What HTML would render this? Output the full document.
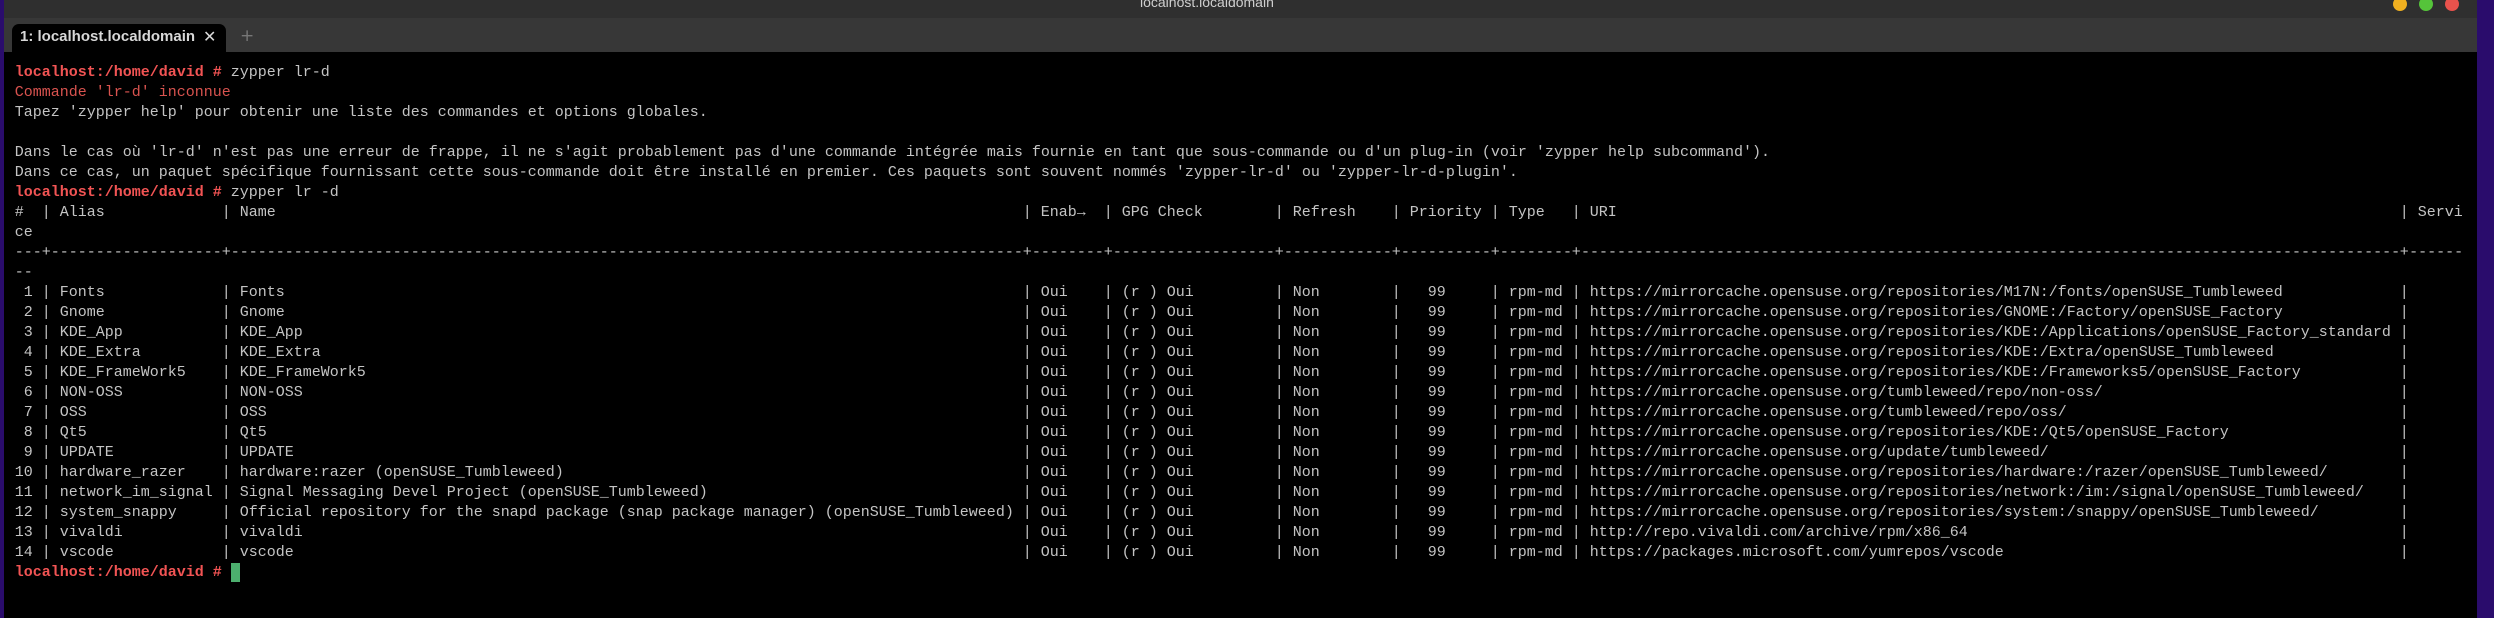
<!DOCTYPE html>
<html><head><meta charset="utf-8"><style>
*{margin:0;padding:0;box-sizing:border-box}
body{width:2494px;height:618px;overflow:hidden;background:#000;position:relative;font-family:"Liberation Mono","DejaVu Sans Mono",monospace}
.pl{position:absolute;top:0;bottom:0;background:#2a0c6c}
#t1{position:absolute;left:4px;top:0;width:2473px;height:18px;background:#2f2f2f}
#t2{position:absolute;left:4px;top:18px;width:2473px;height:34px;background:#373737}
#title{position:absolute;left:1140px;top:-6px;font:14px "Liberation Sans",sans-serif;color:#cfcfcf;white-space:nowrap}
#tab{position:absolute;left:12px;top:24px;width:214px;height:28px;background:#000;border-radius:7px 7px 0 0}
#tabt{position:absolute;left:20px;top:28px;font:bold 15px "Liberation Sans",sans-serif;color:#d8d8d8;white-space:nowrap}
#tabx{position:absolute;left:203px;top:27px;font:16px "DejaVu Sans",sans-serif;color:#d8d8d8}
#plus{position:absolute;left:240px;top:26px;font:17px "DejaVu Sans",sans-serif;color:#777}
.dot{position:absolute;top:-3px;width:14px;height:14px;border-radius:50%}
.l{position:absolute;left:14.7px;height:20px;line-height:20px;font-size:15px;color:#c4c4c4;white-space:pre}
.s{position:absolute;top:0;white-space:pre}
.p{color:#f25454;font-weight:bold}
.r{color:#d9534f}
.k{background:#000}
#cur{position:absolute;left:230.7px;top:563px;width:9px;height:19px;background:#4caf6e}
</style></head><body>
<div class="pl" style="left:0;width:4px"></div>
<div class="pl" style="left:2477px;width:17px"></div>
<div id="t1"></div><div id="t2"></div>
<div id="title">localhost.localdomain</div>
<div class="dot" style="left:2393px;background:#f0b020"></div>
<div class="dot" style="left:2419px;background:#55c43a"></div>
<div class="dot" style="left:2445px;background:#e8524c"></div>
<div id="tab"></div><div id="tabt">1: localhost.localdomain</div><div id="tabx">✕</div><div id="plus">+</div>

<div class="l" style="top:63px"><span class="p">localhost:/home/david # </span>zypper lr-d</div>
<div class="l r" style="top:83px">Commande 'lr-d' inconnue</div>
<div class="l" style="top:103px">Tapez 'zypper help' pour obtenir une liste des commandes et options globales.</div>
<div class="l" style="top:143px">Dans le cas où 'lr-d' n'est pas une erreur de frappe, il ne s'agit probablement pas d'une commande intégrée mais fournie en tant que sous-commande ou d'un plug-in (voir 'zypper help subcommand').</div>
<div class="l" style="top:163px">Dans ce cas, un paquet spécifique fournissant cette sous-commande doit être installé en premier. Ces paquets sont souvent nommés 'zypper-lr-d' ou 'zypper-lr-d-plugin'.</div>
<div class="l" style="top:183px"><span class="p">localhost:/home/david # </span>zypper lr -d</div>

<div class="l" style="top:203px"><span class="s" style="left:0">#</span><span class="s" style="left:27px">| Alias</span><span class="s" style="left:207px">| Name</span><span class="s" style="left:1008px">| Enab<span style="display:inline-block;width:9px;overflow:hidden;vertical-align:top">→</span></span><span class="s" style="left:1089px">| GPG Check</span><span class="s" style="left:1260px">| Refresh</span><span class="s" style="left:1377px">| Priority</span><span class="s" style="left:1476px">| Type</span><span class="s" style="left:1557px">| URI</span><span class="s" style="left:2385px">| Servi</span></div>
<div class="l" style="top:223px">ce</div>
<div class="l" style="top:243px;width:2448px;overflow:hidden"><span class="s" style="left:0">----------------------------------------------------------------------------------------------------------------------------------------------------------------------------------------------------------------------------------------------------------------------------------------------------------------</span><span class="s k" style="left:27px">+</span><span class="s k" style="left:207px">+</span><span class="s k" style="left:1008px">+</span><span class="s k" style="left:1089px">+</span><span class="s k" style="left:1260px">+</span><span class="s k" style="left:1377px">+</span><span class="s k" style="left:1476px">+</span><span class="s k" style="left:1557px">+</span><span class="s k" style="left:2385px">+</span></div>
<div class="l" style="top:263px">--</div>

<div class="l" style="top:283px"><span class="s" style="left:0"> 1</span><span class="s" style="left:27px">| Fonts</span><span class="s" style="left:207px">| Fonts</span><span class="s" style="left:1008px">| Oui</span><span class="s" style="left:1089px">| (r ) Oui</span><span class="s" style="left:1260px">| Non</span><span class="s" style="left:1377px">|   99</span><span class="s" style="left:1476px">| rpm-md</span><span class="s" style="left:1557px">| https://mirrorcache.opensuse.org/repositories/M17N:/fonts/openSUSE_Tumbleweed</span><span class="s" style="left:2385px">|</span></div>
<div class="l" style="top:303px"><span class="s" style="left:0"> 2</span><span class="s" style="left:27px">| Gnome</span><span class="s" style="left:207px">| Gnome</span><span class="s" style="left:1008px">| Oui</span><span class="s" style="left:1089px">| (r ) Oui</span><span class="s" style="left:1260px">| Non</span><span class="s" style="left:1377px">|   99</span><span class="s" style="left:1476px">| rpm-md</span><span class="s" style="left:1557px">| https://mirrorcache.opensuse.org/repositories/GNOME:/Factory/openSUSE_Factory</span><span class="s" style="left:2385px">|</span></div>
<div class="l" style="top:323px"><span class="s" style="left:0"> 3</span><span class="s" style="left:27px">| KDE_App</span><span class="s" style="left:207px">| KDE_App</span><span class="s" style="left:1008px">| Oui</span><span class="s" style="left:1089px">| (r ) Oui</span><span class="s" style="left:1260px">| Non</span><span class="s" style="left:1377px">|   99</span><span class="s" style="left:1476px">| rpm-md</span><span class="s" style="left:1557px">| https://mirrorcache.opensuse.org/repositories/KDE:/Applications/openSUSE_Factory_standard</span><span class="s" style="left:2385px">|</span></div>
<div class="l" style="top:343px"><span class="s" style="left:0"> 4</span><span class="s" style="left:27px">| KDE_Extra</span><span class="s" style="left:207px">| KDE_Extra</span><span class="s" style="left:1008px">| Oui</span><span class="s" style="left:1089px">| (r ) Oui</span><span class="s" style="left:1260px">| Non</span><span class="s" style="left:1377px">|   99</span><span class="s" style="left:1476px">| rpm-md</span><span class="s" style="left:1557px">| https://mirrorcache.opensuse.org/repositories/KDE:/Extra/openSUSE_Tumbleweed</span><span class="s" style="left:2385px">|</span></div>
<div class="l" style="top:363px"><span class="s" style="left:0"> 5</span><span class="s" style="left:27px">| KDE_FrameWork5</span><span class="s" style="left:207px">| KDE_FrameWork5</span><span class="s" style="left:1008px">| Oui</span><span class="s" style="left:1089px">| (r ) Oui</span><span class="s" style="left:1260px">| Non</span><span class="s" style="left:1377px">|   99</span><span class="s" style="left:1476px">| rpm-md</span><span class="s" style="left:1557px">| https://mirrorcache.opensuse.org/repositories/KDE:/Frameworks5/openSUSE_Factory</span><span class="s" style="left:2385px">|</span></div>
<div class="l" style="top:383px"><span class="s" style="left:0"> 6</span><span class="s" style="left:27px">| NON-OSS</span><span class="s" style="left:207px">| NON-OSS</span><span class="s" style="left:1008px">| Oui</span><span class="s" style="left:1089px">| (r ) Oui</span><span class="s" style="left:1260px">| Non</span><span class="s" style="left:1377px">|   99</span><span class="s" style="left:1476px">| rpm-md</span><span class="s" style="left:1557px">| https://mirrorcache.opensuse.org/tumbleweed/repo/non-oss/</span><span class="s" style="left:2385px">|</span></div>
<div class="l" style="top:403px"><span class="s" style="left:0"> 7</span><span class="s" style="left:27px">| OSS</span><span class="s" style="left:207px">| OSS</span><span class="s" style="left:1008px">| Oui</span><span class="s" style="left:1089px">| (r ) Oui</span><span class="s" style="left:1260px">| Non</span><span class="s" style="left:1377px">|   99</span><span class="s" style="left:1476px">| rpm-md</span><span class="s" style="left:1557px">| https://mirrorcache.opensuse.org/tumbleweed/repo/oss/</span><span class="s" style="left:2385px">|</span></div>
<div class="l" style="top:423px"><span class="s" style="left:0"> 8</span><span class="s" style="left:27px">| Qt5</span><span class="s" style="left:207px">| Qt5</span><span class="s" style="left:1008px">| Oui</span><span class="s" style="left:1089px">| (r ) Oui</span><span class="s" style="left:1260px">| Non</span><span class="s" style="left:1377px">|   99</span><span class="s" style="left:1476px">| rpm-md</span><span class="s" style="left:1557px">| https://mirrorcache.opensuse.org/repositories/KDE:/Qt5/openSUSE_Factory</span><span class="s" style="left:2385px">|</span></div>
<div class="l" style="top:443px"><span class="s" style="left:0"> 9</span><span class="s" style="left:27px">| UPDATE</span><span class="s" style="left:207px">| UPDATE</span><span class="s" style="left:1008px">| Oui</span><span class="s" style="left:1089px">| (r ) Oui</span><span class="s" style="left:1260px">| Non</span><span class="s" style="left:1377px">|   99</span><span class="s" style="left:1476px">| rpm-md</span><span class="s" style="left:1557px">| https://mirrorcache.opensuse.org/update/tumbleweed/</span><span class="s" style="left:2385px">|</span></div>
<div class="l" style="top:463px"><span class="s" style="left:0">10</span><span class="s" style="left:27px">| hardware_razer</span><span class="s" style="left:207px">| hardware:razer (openSUSE_Tumbleweed)</span><span class="s" style="left:1008px">| Oui</span><span class="s" style="left:1089px">| (r ) Oui</span><span class="s" style="left:1260px">| Non</span><span class="s" style="left:1377px">|   99</span><span class="s" style="left:1476px">| rpm-md</span><span class="s" style="left:1557px">| https://mirrorcache.opensuse.org/repositories/hardware:/razer/openSUSE_Tumbleweed/</span><span class="s" style="left:2385px">|</span></div>
<div class="l" style="top:483px"><span class="s" style="left:0">11</span><span class="s" style="left:27px">| network_im_signal</span><span class="s" style="left:207px">| Signal Messaging Devel Project (openSUSE_Tumbleweed)</span><span class="s" style="left:1008px">| Oui</span><span class="s" style="left:1089px">| (r ) Oui</span><span class="s" style="left:1260px">| Non</span><span class="s" style="left:1377px">|   99</span><span class="s" style="left:1476px">| rpm-md</span><span class="s" style="left:1557px">| https://mirrorcache.opensuse.org/repositories/network:/im:/signal/openSUSE_Tumbleweed/</span><span class="s" style="left:2385px">|</span></div>
<div class="l" style="top:503px"><span class="s" style="left:0">12</span><span class="s" style="left:27px">| system_snappy</span><span class="s" style="left:207px">| Official repository for the snapd package (snap package manager) (openSUSE_Tumbleweed)</span><span class="s" style="left:1008px">| Oui</span><span class="s" style="left:1089px">| (r ) Oui</span><span class="s" style="left:1260px">| Non</span><span class="s" style="left:1377px">|   99</span><span class="s" style="left:1476px">| rpm-md</span><span class="s" style="left:1557px">| https://mirrorcache.opensuse.org/repositories/system:/snappy/openSUSE_Tumbleweed/</span><span class="s" style="left:2385px">|</span></div>
<div class="l" style="top:523px"><span class="s" style="left:0">13</span><span class="s" style="left:27px">| vivaldi</span><span class="s" style="left:207px">| vivaldi</span><span class="s" style="left:1008px">| Oui</span><span class="s" style="left:1089px">| (r ) Oui</span><span class="s" style="left:1260px">| Non</span><span class="s" style="left:1377px">|   99</span><span class="s" style="left:1476px">| rpm-md</span><span class="s" style="left:1557px">| http://repo.vivaldi.com/archive/rpm/x86_64</span><span class="s" style="left:2385px">|</span></div>
<div class="l" style="top:543px"><span class="s" style="left:0">14</span><span class="s" style="left:27px">| vscode</span><span class="s" style="left:207px">| vscode</span><span class="s" style="left:1008px">| Oui</span><span class="s" style="left:1089px">| (r ) Oui</span><span class="s" style="left:1260px">| Non</span><span class="s" style="left:1377px">|   99</span><span class="s" style="left:1476px">| rpm-md</span><span class="s" style="left:1557px">| https://packages.microsoft.com/yumrepos/vscode</span><span class="s" style="left:2385px">|</span></div>
<div class="l" style="top:563px"><span class="p">localhost:/home/david # </span></div>
<div id="cur"></div>
</body></html>
